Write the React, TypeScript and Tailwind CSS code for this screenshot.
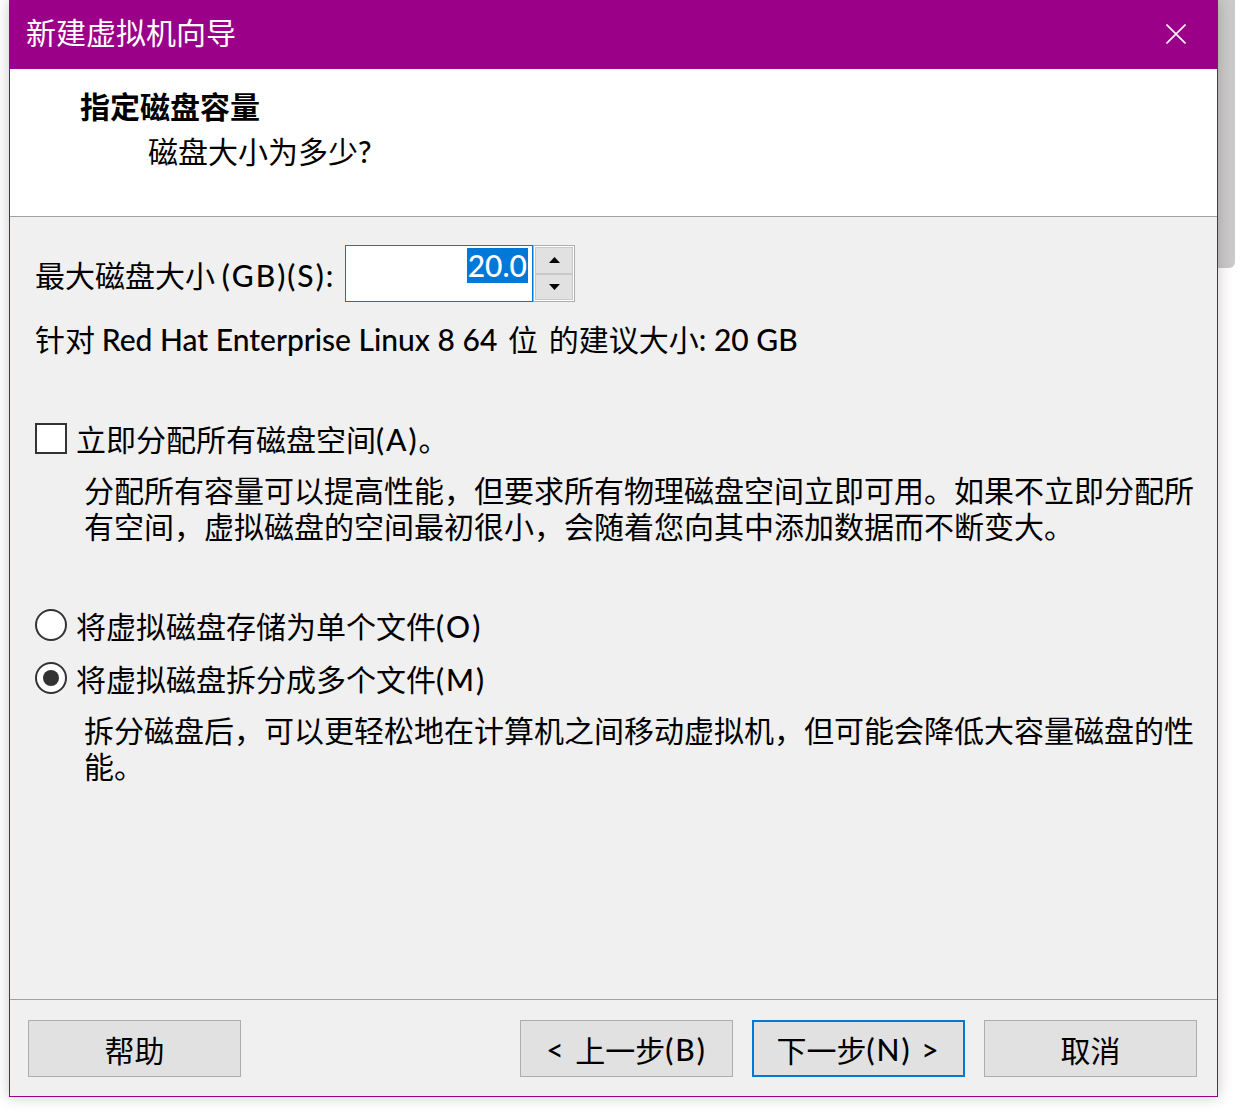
import React from "react";

const cjk = "font-['Noto_Sans_CJK_SC',sans-serif]";

// latin runs get their own font, with a short line box so rows stay 36px
function L({ children, wide }: { children: React.ReactNode; wide?: boolean }) {
  return (
    <span
      className={
        "font-['Lato','Noto_Sans_CJK_SC',sans-serif] text-[30px] font-medium leading-[20px] " +
        (wide ? "tracking-[2px]" : "")
      }
    >
      {children}
    </span>
  );
}

function Btn({ children, focused }: { children: React.ReactNode; focused?: boolean }) {
  return (
    <button
      className={
        "flex h-[57px] w-[213px] items-center justify-center bg-[#e1e1e1] text-[30px] leading-[36px] text-black " +
        (focused ? "border-2 border-[#0078d7]" : "border border-[#adadad]")
      }
    >
      {children}
    </button>
  );
}

export default function App() {
  return (
    <div className={`relative h-[1115px] w-[1246px] overflow-hidden bg-white ${cjk}`}>
      {/* window behind */}
      <div className="absolute left-[1210px] top-0 h-[268px] w-[25px] rounded-br-[6px] bg-[#cacaca]" />

      <div className="relative ml-[9px] flex h-[1097px] w-[1209px] flex-col border-x border-b border-[#9b0088] shadow-[0_0_14px_rgba(0,0,0,0.22)]">
        {/* title bar */}
        <div className="-mx-px flex h-[69px] items-center justify-between bg-[#9b0088] pl-[17px] pr-[32px] text-white">
          <span className="mb-[7px] text-[30px] leading-[36px]">新建虚拟机向导</span>
          <svg width="20" height="20" viewBox="0 0 20 20" className="mb-[2px]">
            <path d="M0.5 0.5 L19.5 19.5 M19.5 0.5 L0.5 19.5" stroke="white" strokeWidth="1.6" />
          </svg>
        </div>

        {/* header */}
        <div className="h-[148px] border-b border-[#a0a0a0] bg-white pl-[70px] pt-[18px] text-black">
          <div className="text-[30px] font-bold leading-[36px]">指定磁盘容量</div>
          <div className="ml-[68px] mt-[9px] text-[30px] leading-[36px]">
            磁盘大小为多少<L>?</L>
          </div>
        </div>

        {/* body */}
        <div className="flex flex-1 flex-col bg-[#f0f0f0] pl-[25px] text-[30px] leading-[36px] text-black">
          <div className="mt-[28px] flex h-[57px] items-center">
            <div className="w-[310px]">
              最大磁盘大小 <L wide>(GB)(S):</L>
            </div>
            <div className="flex h-[57px]">
              <div className="flex w-[188px] justify-end border border-[#0078d7] bg-white pr-[4px] pt-[2px]">
                <span className="h-[35px] bg-[#0078d7] px-[1px] font-['Lato',sans-serif] text-[30px] font-medium leading-[35px] text-white">
                  20.0
                </span>
              </div>
              <div className="flex w-[42px] flex-col border border-[#adadad] bg-white p-px">
                <div className="flex flex-1 items-center justify-center border border-[#c8c8c8] bg-[#e1e1e1]">
                  <svg width="11" height="6" viewBox="0 0 11 6"><path d="M5.5 0 L11 6 L0 6 Z" fill="black" /></svg>
                </div>
                <div className="flex flex-1 items-center justify-center border border-[#c8c8c8] bg-[#e1e1e1]">
                  <svg width="11" height="6" viewBox="0 0 11 6"><path d="M0 0 L11 0 L5.5 6 Z" fill="black" /></svg>
                </div>
              </div>
            </div>
          </div>

          <div className="mt-[18px]">
            针对 <L>Red Hat Enterprise Linux 8 64</L>
            <span className="mx-[4px]"> 位 </span>的建议大小<L>: 20 GB</L>
          </div>

          <div className="mt-[64px] flex h-[36px] items-center">
            <span className="h-[31px] w-[32px] border-2 border-[#333333] bg-white" />
            <span className="ml-[9px]">
              立即分配所有磁盘空间<L wide>(A)</L>。
            </span>
          </div>
          <p className="mt-[15px] w-[1170px] pl-[49px]">
            分配所有容量可以提高性能，但要求所有物理磁盘空间立即可用。如果不立即分配所有空间，虚拟磁盘的空间最初很小，会随着您向其中添加数据而不断变大。
          </p>

          <div className="mt-[64px] flex h-[36px] items-center">
            <span className="h-[32px] w-[32px] rounded-full border-2 border-[#333333] bg-white" />
            <span className="ml-[9px]">
              将虚拟磁盘存储为单个文件<L wide>(O)</L>
            </span>
          </div>
          <div className="mt-[17px] flex h-[36px] items-center">
            <span className="flex h-[32px] w-[32px] items-center justify-center rounded-full border-2 border-[#333333] bg-white">
              <span className="h-[16px] w-[16px] rounded-full bg-[#333333]" />
            </span>
            <span className="ml-[9px]">
              将虚拟磁盘拆分成多个文件<L wide>(M)</L>
            </span>
          </div>
          <p className="mt-[15px] w-[1170px] pl-[49px]">
            拆分磁盘后，可以更轻松地在计算机之间移动虚拟机，但可能会降低大容量磁盘的性能。
          </p>
        </div>

        {/* footer */}
        <div className="flex h-[97px] items-start justify-between border-t border-[#a0a0a0] bg-[#f0f0f0] pl-[18px] pr-[20px] pt-[20px]">
          <Btn>帮助</Btn>
          <div className="flex gap-[19px]">
            <Btn>
              <L wide>&lt;&nbsp;</L>上一步<L wide>(B)</L>
            </Btn>
            <Btn focused>
              下一步<L wide>(N) &gt;</L>
            </Btn>
            <Btn>取消</Btn>
          </div>
        </div>
      </div>
    </div>
  );
}
